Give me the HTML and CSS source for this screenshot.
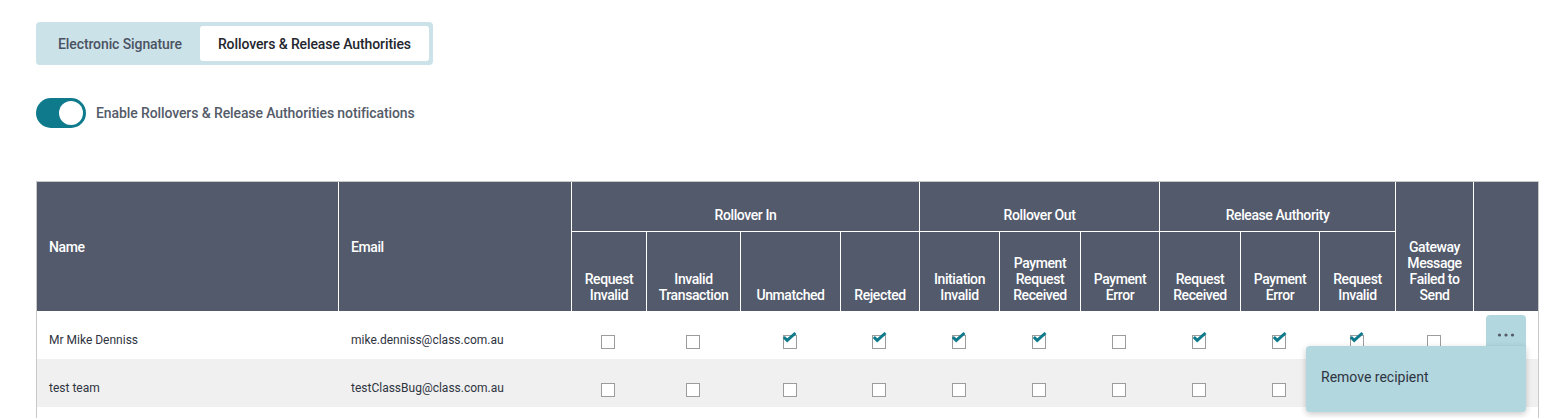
FILE: index.html
```html
<!DOCTYPE html>
<html lang="en">
<head>
<meta charset="utf-8">
<title>Notifications</title>
<link rel="stylesheet" href="styles.css">
</head>
<body>
<div class="page">
  <div class="tabs">
    <button class="tab">Electronic Signature</button>
    <button class="tab active">Rollovers &amp; Release Authorities</button>
  </div>

  <label class="toggle-row">
    <span class="switch"><span class="knob"></span></span>
    <span class="toggle-label">Enable Rollovers &amp; Release Authorities notifications</span>
  </label>

  <table class="grid">
    <colgroup>
      <col style="width:302px"><col style="width:233px">
      <col style="width:75px"><col style="width:94px"><col style="width:100px"><col style="width:79px">
      <col style="width:80px"><col style="width:81px"><col style="width:79px">
      <col style="width:81px"><col style="width:79px"><col style="width:76px">
      <col style="width:78px"><col style="width:64px">
    </colgroup>
    <thead>
      <tr class="hr1">
        <th rowspan="2" class="th-left">Name</th>
        <th rowspan="2" class="th-left">Email</th>
        <th colspan="4">Rollover In</th>
        <th colspan="3">Rollover Out</th>
        <th colspan="3">Release Authority</th>
        <th rowspan="2">Gateway Message Failed to Send</th>
        <th rowspan="2" class="th-last"></th>
      </tr>
      <tr class="hr2">
        <th>Request Invalid</th>
        <th>Invalid Transaction</th>
        <th>Unmatched</th>
        <th>Rejected</th>
        <th>Initiation Invalid</th>
        <th>Payment Request Received</th>
        <th>Payment Error</th>
        <th>Request Received</th>
        <th>Payment Error</th>
        <th>Request Invalid</th>
      </tr>
    </thead>
    <tbody>
      <tr>
        <td class="name">Mr Mike Denniss</td>
        <td class="email">mike.denniss@class.com.au</td>
        <td class="cb"><span class="box"></span></td>
        <td class="cb"><span class="box"></span></td>
        <td class="cb"><span class="box checked"><svg viewBox="0 0 14 14" class="tick"><path d="M1.8 3 L5.2 6.4 L13.5 -1"/></svg></span></td>
        <td class="cb"><span class="box checked"><svg viewBox="0 0 14 14" class="tick"><path d="M1.8 3 L5.2 6.4 L13.5 -1"/></svg></span></td>
        <td class="cb"><span class="box checked"><svg viewBox="0 0 14 14" class="tick"><path d="M1.8 3 L5.2 6.4 L13.5 -1"/></svg></span></td>
        <td class="cb"><span class="box checked"><svg viewBox="0 0 14 14" class="tick"><path d="M1.8 3 L5.2 6.4 L13.5 -1"/></svg></span></td>
        <td class="cb"><span class="box"></span></td>
        <td class="cb"><span class="box checked"><svg viewBox="0 0 14 14" class="tick"><path d="M1.8 3 L5.2 6.4 L13.5 -1"/></svg></span></td>
        <td class="cb"><span class="box checked"><svg viewBox="0 0 14 14" class="tick"><path d="M1.8 3 L5.2 6.4 L13.5 -1"/></svg></span></td>
        <td class="cb"><span class="box checked"><svg viewBox="0 0 14 14" class="tick"><path d="M1.8 3 L5.2 6.4 L13.5 -1"/></svg></span></td>
        <td class="cb"><span class="box"></span></td>
        <td class="actions">
          <div class="menu-wrap">
            <button class="dots" aria-label="More actions">
              <svg viewBox="0 0 18 4" width="18" height="4"><circle cx="2.5" cy="2" r="1.6"/><circle cx="9" cy="2" r="1.6"/><circle cx="15.5" cy="2" r="1.6"/></svg>
            </button>
            <div class="menu">
              <div class="menu-item">Remove recipient</div>
            </div>
          </div>
        </td>
      </tr>
      <tr class="alt">
        <td class="name">test team</td>
        <td class="email">testClassBug@class.com.au</td>
        <td class="cb"><span class="box"></span></td>
        <td class="cb"><span class="box"></span></td>
        <td class="cb"><span class="box"></span></td>
        <td class="cb"><span class="box"></span></td>
        <td class="cb"><span class="box"></span></td>
        <td class="cb"><span class="box"></span></td>
        <td class="cb"><span class="box"></span></td>
        <td class="cb"><span class="box"></span></td>
        <td class="cb"><span class="box"></span></td>
        <td class="cb"><span class="box"></span></td>
        <td class="cb"><span class="box"></span></td>
        <td class="actions"></td>
      </tr>
      <tr class="blank">
        <td colspan="14"></td>
      </tr>
    </tbody>
  </table>
</div>
</body>
</html>
```

FILE: styles.css
```css
* { box-sizing: border-box; }

html, body {
  margin: 0;
  padding: 0;
  background: #ffffff;
}

body {
  font-family: Roboto, "Liberation Sans", Arial, sans-serif;
  color: #2f3441;
}

.page {
  padding: 22px 0 0 36px;
}

/* Tabs */
.tabs {
  display: inline-flex;
  padding: 4px;
  background: #cce2e9;
  border-radius: 4px;
}

.tab {
  height: 35px;
  padding: 0 18px;
  border: 0;
  border-radius: 3px;
  background: transparent;
  font-family: inherit;
  font-size: 14px;
  font-weight: 500;
  letter-spacing: -0.1px;
  color: #4b5262;
  cursor: pointer;
}

.tab.active {
  background: #ffffff;
  color: #23262e;
}

/* Toggle */
.toggle-row {
  display: flex;
  align-items: center;
  gap: 10px;
  margin-top: 33px;
}

.switch {
  width: 50px;
  height: 30px;
  border-radius: 15px;
  background: #0e7a8c;
  display: flex;
  align-items: center;
  justify-content: flex-end;
  padding: 0 3px;
}

.knob {
  width: 24px;
  height: 24px;
  border-radius: 50%;
  background: #ffffff;
}

.toggle-label {
  font-size: 14px;
  font-weight: 500;
  letter-spacing: -0.1px;
  color: #545b69;
}

/* Table */
.grid {
  margin-top: 53px;
  width: 1503px;
  table-layout: fixed;
  border-collapse: separate;
  border-spacing: 0;
  border: 1px solid #c9c9c9;
  border-bottom: 0;
}

.grid th {
  background: #525a6b;
  color: #ffffff;
  font-size: 14px;
  font-weight: 500;
  letter-spacing: -0.4px;
  line-height: 16px;
  text-align: center;
  vertical-align: bottom;
  padding: 8px 4px;
  border-right: 1px solid #ffffff;
}

.grid .hr1 th {
  height: 49px;
}

.grid .hr2 th {
  height: 80px;
  border-top: 1px solid #ffffff;
}

.grid th.th-left {
  text-align: left;
  vertical-align: middle;
  padding-left: 12px;
}

.grid th.th-last {
  border-right: 0;
}

.grid td {
  height: 48px;
  padding: 10px 12px 0;
  font-size: 12px;
  color: #2f3441;
  vertical-align: middle;
  white-space: nowrap;
}

.grid tr.alt td {
  background: #f0f0f0;
}

.grid td.cb {
  text-align: center;
  padding-left: 0;
  padding-right: 3px;
}

.box {
  display: inline-block;
  position: relative;
  width: 14px;
  height: 14px;
  border: 1.5px solid #9c9c9c;
  background: #ffffff;
  vertical-align: middle;
  margin-top: 3px;
}

.tick {
  position: absolute;
  left: -1.5px;
  top: -1.5px;
  width: 14px;
  height: 14px;
  overflow: visible;
  fill: none;
  stroke: #0e7a8c;
  stroke-width: 3;
}

.grid td.actions {
  padding: 4px 0 0;
  vertical-align: top;
}

.menu-wrap {
  position: relative;
  width: 40px;
  margin: 0 auto;
}

.dots {
  width: 40px;
  height: 40px;
  border: 0;
  border-radius: 4px;
  background: #b2d7df;
  display: flex;
  align-items: center;
  justify-content: center;
  padding: 0;
  cursor: pointer;
}

.dots svg {
  fill: #555b66;
}

.menu {
  position: absolute;
  top: 31px;
  right: 0;
  width: 220px;
  height: 66px;
  background: #b2d7df;
  border-radius: 4px;
  box-shadow: 0 2px 6px rgba(0, 0, 0, 0.22);
  display: flex;
  align-items: center;
  padding: 0 15px;
  z-index: 2;
}

.menu-item {
  font-size: 14px;
  color: #2f3441;
  margin-top: -4px;
}
```
